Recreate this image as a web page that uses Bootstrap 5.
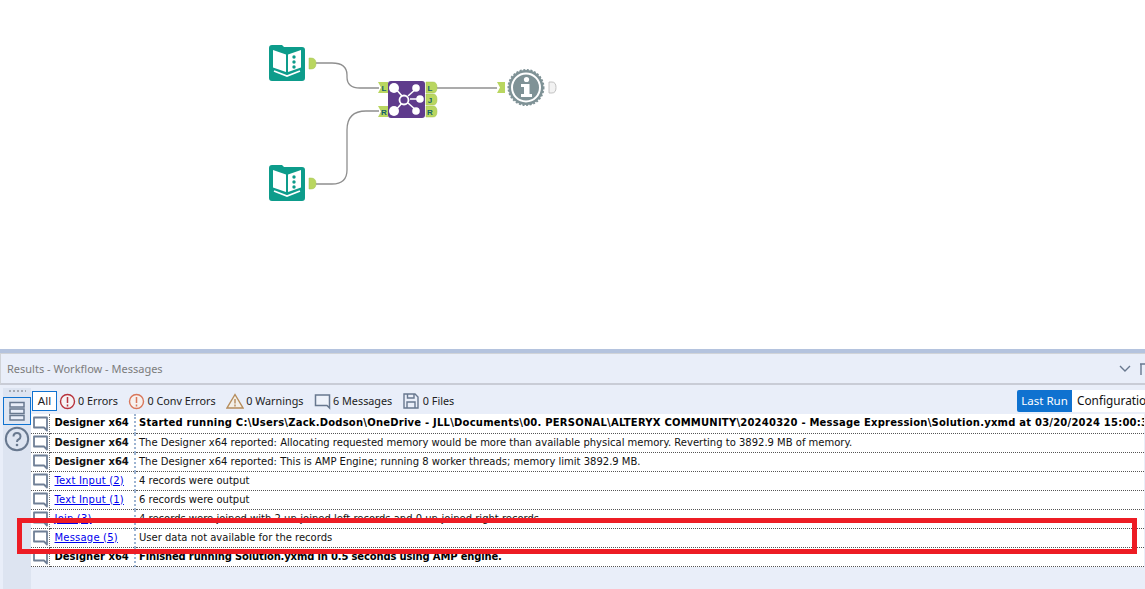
<!DOCTYPE html>
<html lang="en">
<head>
<meta charset="utf-8">
<title>Results - Workflow - Messages</title>
<link href="https://cdn.jsdelivr.net/npm/bootstrap@5.3.0/dist/css/bootstrap.min.css" rel="stylesheet">
<style>
html,body{height:100%;margin:0;overflow:hidden;background:#fff}
body{font-family:"Noto Sans","DejaVu Sans",sans-serif;font-size:11px;color:#111}
.stage{width:1145px;height:589px;position:relative;overflow:hidden}
.canvas-area{height:349px;background:#fff}
.canvas-area svg{display:block}
.pane{height:240px;background:#e9eef9;border-top:4px solid #b4c3de}
.pane-head{height:32px;border:1px solid #d0d3d8;border-right:0;border-bottom:2px solid #c9ccd6;color:#7c7c7c;font-size:11px;padding:1px 0 0 6px}
.pane-body{height:201px;margin-top:3px}
.side-strip{width:28px;margin-left:3px;background:#dde4f1}
.grip{height:9px}
.grip i{display:block;width:18px;margin:0 auto;padding-top:2px;background-image:radial-gradient(circle,#a4a9b3 1px,transparent 1px);background-size:4px 2px;background-repeat:repeat-x;background-position:0 2px;height:5px}
.side-on{width:28px;height:28px;border:1px solid #0f72d0;background:#dfe6f2}
.side-help{height:30px;margin-top:-1px}
.tool-row{height:26px;padding:0 0 0 1px;font-size:10.8px;color:#222}
.all-btn{width:25px;height:20px;border:1px solid #0f72d0;background:#fff;font-size:11.5px;margin-right:2px}
.tool-item{margin-right:10.6px;gap:2px}
.tool-last{gap:4px}
.run-tabs{height:22px;font-size:11.5px}
.run-on{width:55px;background:#0f72d0;color:#fff;border-radius:2px 0 0 2px}
.run-off{width:73px;background:#fff;color:#111;padding-left:5px;white-space:nowrap;overflow:hidden;font-size:11.8px}
.msg-table{width:1113px;table-layout:fixed;border-collapse:collapse;background:#fff;margin:0}
.msg-table td{height:19px;padding:0;vertical-align:middle;border-bottom:1px dotted #555;white-space:nowrap;overflow:hidden;font-family:"DejaVu Sans",sans-serif;font-size:10px;line-height:18px;color:#111;background:#fff}
.msg-table .c-ic{width:18px;border-right:1px dotted #777;padding-left:1px}
.msg-table .c-nm{width:86px;padding-left:5px;border-right:2px dotted #9db4d2}
.msg-table .c-tx{padding-left:3px}
.msg-table svg{display:block}
.msg-table a{color:#0000ee;letter-spacing:.2px}
.strong-row td{font-weight:700;color:#000}
.msg-table .c-tx.wide-run{letter-spacing:.22px}
.msg-table .c-tx.tight-run{letter-spacing:-.16px}
.red-mark{position:absolute;left:17px;top:518px;width:1120px;height:36px;border:5px solid #ed1c24;pointer-events:none}
</style>
</head>
<body>
<div class="stage">
  <div class="canvas-area">
    <svg width="1145" height="349" viewBox="0 0 1145 349">
      <defs>
        <g id="book">
          <path d="M0 3Q0 0 3 0H13L15 2H33Q36 2 36 5V33Q36 36 33 36H3Q0 36 0 33Z" fill="#0d9c8b"/>
          <path d="M4 5L17 9.500V27L4 22.500Z M19 9.500L32 5V22.500L19 27Z" fill="#fff"/>
          <path d="M5 26L18 31L31 26" fill="none" stroke="#fff" stroke-width="1.800"/>
          <circle cx="25" cy="12" r="1.700" fill="#0d9c8b"/><circle cx="25" cy="17" r="1.700" fill="#0d9c8b"/><circle cx="25" cy="22" r="1.700" fill="#0d9c8b"/>
        </g>
        <path id="outp" d="M0 0H2Q7 0 7 5.500T2 11H0Z" fill="#b9d660" stroke="#a4c24e" stroke-width=".5"/>
        <path id="outw" d="M0 0H7Q11 0 11 5.500T7 11H0Z" fill="#b9d660" stroke="#a4c24e" stroke-width=".5"/>
      </defs>
      <g fill="none" stroke="#8f8f8f" stroke-width="1.300">
        <path d="M316 63H332Q347 63 347 75V77Q347 88 360 88H379"/>
        <path d="M316 184H332Q347 184 347 170V130Q347 111 366 111H379"/>
        <path d="M437 88H497"/>
      </g>
      <use href="#book" x="269" y="45"/>
      <use href="#book" x="269" y="165"/>
      <use href="#outp" x="309" y="58"/>
      <use href="#outp" x="309" y="178"/>
      <path d="M378 82H388V93H378L381 87.500Z" fill="#b9d660"/>
      <path d="M378 106H388V117H378L381 111.500Z" fill="#b9d660"/>
      <rect x="388" y="81" width="37" height="37" rx="3" fill="#5f3b8c"/>
      <g stroke="#fff" stroke-width="1.600">
        <path d="M395 88L402 96M417 88L408 96M419 99H410M395 111L402 103M417 111L408 103"/>
      </g>
      <g fill="#fff">
        <circle cx="394" cy="88" r="5"/><circle cx="416" cy="88" r="3.800"/><circle cx="420" cy="99" r="3.800"/><circle cx="394" cy="111" r="5"/><circle cx="416" cy="111" r="3.800"/>
      </g>
      <circle cx="404" cy="100" r="4.500" fill="#5f3b8c" stroke="#fff" stroke-width="1.800"/>
      <use href="#outw" x="426" y="82"/>
      <use href="#outw" x="426" y="94"/>
      <use href="#outw" x="426" y="106"/>
      <g font-family="Liberation Sans,sans-serif" font-size="8" font-weight="700" fill="#14606a" text-anchor="middle">
        <text x="384" y="90.500">L</text><text x="384" y="114.500">R</text>
        <text x="430" y="90.500">L</text><text x="430" y="102.500">J</text><text x="430" y="114.500">R</text>
      </g>
      <path d="M497 82H505V93H497L500 87.500Z" fill="#b9d660"/>
      <circle cx="526" cy="87.500" r="17.500" fill="#7f9296" stroke="#7f9296" stroke-width="2" stroke-dasharray="2 1.600"/>
      <circle cx="526" cy="87.500" r="14" fill="none" stroke="#fff" stroke-width="2"/>
      <circle cx="526.500" cy="79.500" r="2.600" fill="#fff"/>
      <path d="M521 84H529.500V94H532V97H521V94H524V87H521Z" fill="#fff"/>
      <path d="M549 82H552Q556 82 556 87.500T552 93H549Z" fill="#f2f2f2" stroke="#b5b5b5" stroke-width=".8"/>
    </svg>
  </div>
  <div class="pane">
    <div class="pane-head d-flex align-items-center justify-content-between">
      <span>Results - Workflow - Messages</span>
      <span class="d-flex align-items-center gap-2">
        <svg width="12" height="8" viewBox="0 0 12 8"><path d="M1 1L6 6L11 1" fill="none" stroke="#68788f" stroke-width="1.400"/></svg>
        <svg width="6" height="12" viewBox="0 0 6 12"><path d="M1 1H6M2 1V12" fill="none" stroke="#68788f" stroke-width="1.400"/></svg>
      </span>
    </div>
    <div class="pane-body d-flex">
      <div class="side-strip flex-shrink-0">
        <div class="grip"><i></i></div>
        <div class="side-on d-flex align-items-center justify-content-center">
          <svg width="18" height="20" viewBox="0 0 18 20" fill="#e9eef9" stroke="#68788f" stroke-width="1.500"><rect x="2" y="1.500" width="14" height="4.500"/><rect x="2" y="8" width="14" height="4.500"/><rect x="2" y="14.500" width="14" height="4.500"/></svg>
        </div>
        <div class="side-help d-flex align-items-center justify-content-center">
          <svg width="26" height="26" viewBox="0 0 26 26"><circle cx="13" cy="13" r="11.200" fill="none" stroke="#68788f" stroke-width="2"/><path d="M9.500 10.500Q9.500 7 13 7T16.500 10.500Q16.500 12.500 14.500 13.500Q13 14.200 13 16" fill="none" stroke="#68788f" stroke-width="2"/><circle cx="13" cy="19" r="1.300" fill="#68788f"/></svg>
        </div>
      </div>
      <div class="flex-grow-1 overflow-hidden">
        <div class="tool-row d-flex align-items-center">
          <span class="all-btn d-flex align-items-center justify-content-center">All</span>
          <span class="tool-item d-flex align-items-center"><svg width="17" height="17" viewBox="0 0 17 17"><circle cx="8.500" cy="8.500" r="7" fill="#f5f2f4" stroke="#b8323c" stroke-width="1.400"/><path d="M8.500 4V10M8.500 11.500V13.500" stroke="#b8323c" stroke-width="1.500"/></svg>0 Errors</span>
          <span class="tool-item d-flex align-items-center"><svg width="17" height="17" viewBox="0 0 17 17"><circle cx="8.500" cy="8.500" r="7" fill="#f6f0ee" stroke="#d9765a" stroke-width="1.400"/><path d="M8.500 4V10M8.500 11.500V13.500" stroke="#d9765a" stroke-width="1.500"/></svg>0 Conv Errors</span>
          <span class="tool-item d-flex align-items-center"><svg width="18" height="16" viewBox="0 0 18 16"><path d="M9 1.500L17 15H1Z" fill="#f3efe7" stroke="#b58c5c" stroke-width="1.400"/><path d="M9 6V10.500M9 11.500V13.500" stroke="#b58c5c" stroke-width="1.400"/></svg>0 Warnings</span>
          <span class="tool-item d-flex align-items-center"><svg width="17" height="17" viewBox="0 0 17 17"><path d="M1.500 2H15.500V15L13 12.500H1.500Z" fill="#eef2fa" stroke="#68788f" stroke-width="1.500"/></svg>6 Messages</span>
          <span class="tool-item tool-last d-flex align-items-center"><svg width="16" height="16" viewBox="0 0 16 16" fill="none" stroke="#68788f" stroke-width="1.400"><path d="M1 1H12L15 4V15H1Z"/><path d="M4.500 1V5H11V1M4 15V9H12V15"/></svg>0 Files</span>
          <div class="run-tabs d-flex ms-auto flex-shrink-0">
            <span class="run-on d-flex align-items-center justify-content-center">Last Run</span>
            <span class="run-off d-flex align-items-center">Configuration</span>
          </div>
        </div>
        <table class="msg-table">
          <tbody>
            <tr class="strong-row"><td class="c-ic"><svg width="17" height="17" viewBox="0 0 17 17"><use href="#bub"/></svg></td><td class="c-nm">Designer x64</td><td class="c-tx wide-run">Started running C:\Users\Zack.Dodson\OneDrive - JLL\Documents\00. PERSONAL\ALTERYX COMMUNITY\20240320 - Message Expression\Solution.yxmd at 03/20/2024 15:00:34</td></tr>
            <tr><td class="c-ic"><svg width="17" height="17" viewBox="0 0 17 17"><use href="#bub"/></svg></td><td class="c-nm fw-bold">Designer x64</td><td class="c-tx">The Designer x64 reported: Allocating requested memory would be more than available physical memory. Reverting to 3892.9 MB of memory.</td></tr>
            <tr><td class="c-ic"><svg width="17" height="17" viewBox="0 0 17 17"><use href="#bub"/></svg></td><td class="c-nm fw-bold">Designer x64</td><td class="c-tx">The Designer x64 reported: This is AMP Engine; running 8 worker threads; memory limit 3892.9 MB.</td></tr>
            <tr><td class="c-ic"><svg width="17" height="17" viewBox="0 0 17 17"><use href="#bub"/></svg></td><td class="c-nm"><a href="#">Text Input (2)</a></td><td class="c-tx">4 records were output</td></tr>
            <tr><td class="c-ic"><svg width="17" height="17" viewBox="0 0 17 17"><use href="#bub"/></svg></td><td class="c-nm"><a href="#">Text Input (1)</a></td><td class="c-tx">6 records were output</td></tr>
            <tr><td class="c-ic"><svg width="17" height="17" viewBox="0 0 17 17"><use href="#bub"/></svg></td><td class="c-nm"><a href="#">Join (3)</a></td><td class="c-tx">4 records were joined with 2 un-joined left records and 0 un-joined right records</td></tr>
            <tr><td class="c-ic"><svg width="17" height="17" viewBox="0 0 17 17"><use href="#bub"/></svg></td><td class="c-nm"><a href="#">Message (5)</a></td><td class="c-tx">User data not available for the records</td></tr>
            <tr class="strong-row"><td class="c-ic"><svg width="17" height="17" viewBox="0 0 17 17"><use href="#bub"/></svg></td><td class="c-nm">Designer x64</td><td class="c-tx tight-run">Finished running Solution.yxmd in 0.5 seconds using AMP engine.</td></tr>
          </tbody>
        </table>
      </div>
    </div>
  </div>
  <div class="red-mark"></div>
  <svg width="0" height="0" class="position-absolute"><defs><path id="bub" d="M2 2.500H15V15.500L12 12.500H2Z" fill="#fff" stroke="#6f7f96" stroke-width="1.800" stroke-linejoin="round"/></defs></svg>
</div>
<script src="https://cdn.jsdelivr.net/npm/bootstrap@5.3.0/dist/js/bootstrap.bundle.min.js"></script>
</body>
</html>
